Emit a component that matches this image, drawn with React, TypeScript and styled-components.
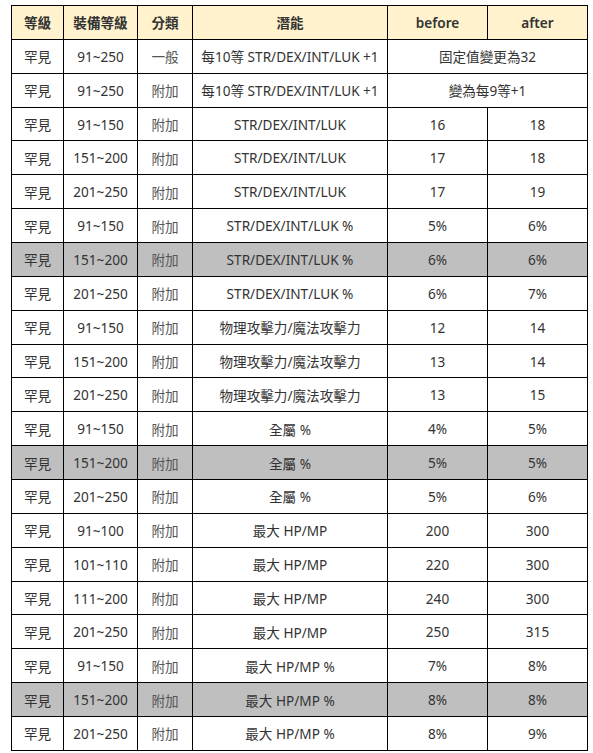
import * as React from "react";
import styled, { createGlobalStyle } from "styled-components";

const GlobalStyle = createGlobalStyle`
  body {
    margin: 0;
    background: #fff;
    font-family: "Noto Sans", "Noto Sans CJK TC", sans-serif;
  }
`;

type Row = {
  lv: string;
  range: string;
  kind: string;
  stat: string;
  before: string;
  after?: string;
  gray?: boolean;
};

const rows: Row[] = [
  { lv: "罕見", range: "91~250", kind: "一般", stat: "每10等 STR/DEX/INT/LUK +1", before: "固定值變更為32" },
  { lv: "罕見", range: "91~250", kind: "附加", stat: "每10等 STR/DEX/INT/LUK +1", before: "變為每9等+1" },
  { lv: "罕見", range: "91~150", kind: "附加", stat: "STR/DEX/INT/LUK", before: "16", after: "18" },
  { lv: "罕見", range: "151~200", kind: "附加", stat: "STR/DEX/INT/LUK", before: "17", after: "18" },
  { lv: "罕見", range: "201~250", kind: "附加", stat: "STR/DEX/INT/LUK", before: "17", after: "19" },
  { lv: "罕見", range: "91~150", kind: "附加", stat: "STR/DEX/INT/LUK %", before: "5%", after: "6%" },
  { lv: "罕見", range: "151~200", kind: "附加", stat: "STR/DEX/INT/LUK %", before: "6%", after: "6%", gray: true },
  { lv: "罕見", range: "201~250", kind: "附加", stat: "STR/DEX/INT/LUK %", before: "6%", after: "7%" },
  { lv: "罕見", range: "91~150", kind: "附加", stat: "物理攻擊力/魔法攻擊力", before: "12", after: "14" },
  { lv: "罕見", range: "151~200", kind: "附加", stat: "物理攻擊力/魔法攻擊力", before: "13", after: "14" },
  { lv: "罕見", range: "201~250", kind: "附加", stat: "物理攻擊力/魔法攻擊力", before: "13", after: "15" },
  { lv: "罕見", range: "91~150", kind: "附加", stat: "全屬 %", before: "4%", after: "5%" },
  { lv: "罕見", range: "151~200", kind: "附加", stat: "全屬 %", before: "5%", after: "5%", gray: true },
  { lv: "罕見", range: "201~250", kind: "附加", stat: "全屬 %", before: "5%", after: "6%" },
  { lv: "罕見", range: "91~100", kind: "附加", stat: "最大 HP/MP", before: "200", after: "300" },
  { lv: "罕見", range: "101~110", kind: "附加", stat: "最大 HP/MP", before: "220", after: "300" },
  { lv: "罕見", range: "111~200", kind: "附加", stat: "最大 HP/MP", before: "240", after: "300" },
  { lv: "罕見", range: "201~250", kind: "附加", stat: "最大 HP/MP", before: "250", after: "315" },
  { lv: "罕見", range: "91~150", kind: "附加", stat: "最大 HP/MP %", before: "7%", after: "8%" },
  { lv: "罕見", range: "151~200", kind: "附加", stat: "最大 HP/MP %", before: "8%", after: "8%", gray: true },
  { lv: "罕見", range: "201~250", kind: "附加", stat: "最大 HP/MP %", before: "8%", after: "9%" },
];

export default function App() {
  return (
    <>
      <GlobalStyle />
      <Page>
        <Table>
          <colgroup>
            <col style={{ width: 52 }} />
            <col style={{ width: 74 }} />
            <col style={{ width: 55 }} />
            <col style={{ width: 195 }} />
            <col style={{ width: 100 }} />
            <col style={{ width: 100 }} />
          </colgroup>
          <thead>
            <tr>
              <Th>等級</Th>
              <Th>裝備等級</Th>
              <Th>分類</Th>
              <Th>潛能</Th>
              <Th>before</Th>
              <Th>after</Th>
            </tr>
          </thead>
          <tbody>
            {rows.map((r, i) => (
              <Tr key={i} $gray={r.gray}>
                <Td>{r.lv}</Td>
                <Td>{r.range}</Td>
                <Td $soft>{r.kind}</Td>
                <Td>{r.stat}</Td>
                {r.after === undefined ? (
                  <Td colSpan={2}>{r.before}</Td>
                ) : (
                  <>
                    <Td>{r.before}</Td>
                    <Td>{r.after}</Td>
                  </>
                )}
              </Tr>
            ))}
          </tbody>
        </Table>
      </Page>
    </>
  );
}

const Page = styled.div`
  padding: 5px 0 0 11px;
`;

const Table = styled.table`
  border-collapse: collapse;
  table-layout: fixed;
  width: 576px;
  font-size: 13.6px;
  color: #333;
`;

const Th = styled.th`
  height: 32.86px;
  padding: 0;
  border: 1px solid #000;
  background: #fff2cc;
  font-weight: 600;
  text-align: center;
  color: #333;
`;

const Tr = styled.tr<{ $gray?: boolean }>`
  background: ${(p) => (p.$gray ? "#bfbfbf" : "#fff")};
`;

const Td = styled.td<{ $soft?: boolean }>`
  height: 32.86px;
  padding: 0;
  border: 1px solid #000;
  text-align: center;
  white-space: nowrap;
  color: ${(p) => (p.$soft ? "#555" : "#333")};
`;
